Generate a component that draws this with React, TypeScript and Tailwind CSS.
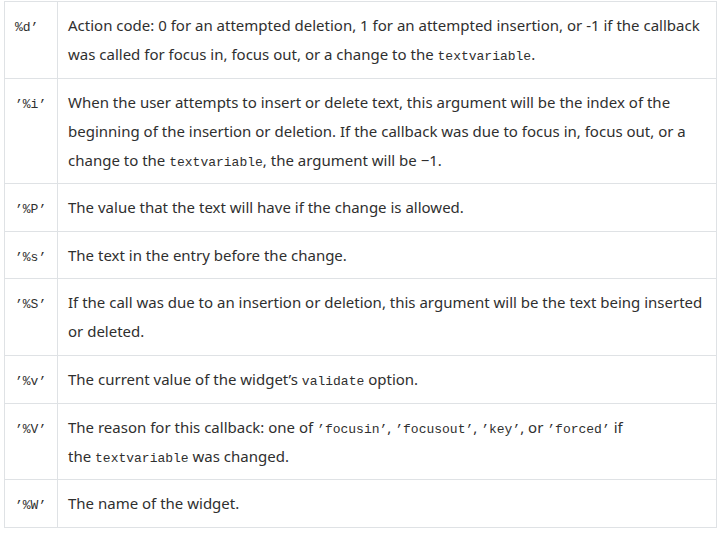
import React from "react";

const C = ({ children }: { children: React.ReactNode }) => (
  <code className="font-['Liberation_Mono',monospace] text-[13px] leading-none">{children}</code>
);

const rows: { code: string; lines: React.ReactNode[] }[] = [
  {
    code: "%d’",
    lines: [
      "Action code: 0 for an attempted deletion, 1 for an attempted insertion, or -1 if the callback",
      <>was called for focus in, focus out, or a change to the <C>textvariable</C>.</>,
    ],
  },
  {
    code: "’%i’",
    lines: [
      "When the user attempts to insert or delete text, this argument will be the index of the",
      "beginning of the insertion or deletion. If the callback was due to focus in, focus out, or a",
      <>change to the <C>textvariable</C>, the argument will be −1.</>,
    ],
  },
  { code: "’%P’", lines: ["The value that the text will have if the change is allowed."] },
  { code: "’%s’", lines: ["The text in the entry before the change."] },
  {
    code: "’%S’",
    lines: [
      "If the call was due to an insertion or deletion, this argument will be the text being inserted",
      "or deleted.",
    ],
  },
  {
    code: "’%v’",
    lines: [<>The current value of the widget’s <C>validate</C> option.</>],
  },
  {
    code: "’%V’",
    lines: [
      <>
        The reason for this callback: one of <C>’focusin’</C>, <C>’focusout’</C>, <C>’key’</C>, or{" "}
        <C>’forced’</C> if
      </>,
      <>the <C>textvariable</C> was changed.</>,
    ],
  },
  { code: "’%W’", lines: ["The name of the widget."] },
];

export default function App() {
  return (
    <div className="bg-white pt-px pl-1 w-[719px] h-[533px] font-['Noto_Sans',sans-serif] text-[15px] text-[#2f2f2f]">
      <table className="border-collapse w-[713px]">
        <tbody>
          {rows.map((r, i) => (
            <tr key={i}>
              <td className="border border-[#dfe2e5] w-[53px] px-[10px] pt-[9px] pb-[8.6px] align-top leading-[29px] whitespace-nowrap">
                <C>{r.code}</C>
              </td>
              <td className="border border-[#dfe2e5] px-[10px] pt-[9px] pb-[8.6px] align-top leading-[29px]">
                {r.lines.map((l, j) => (
                  <div key={j} className="whitespace-nowrap h-[29px]">
                    {l}
                  </div>
                ))}
              </td>
            </tr>
          ))}
        </tbody>
      </table>
    </div>
  );
}
